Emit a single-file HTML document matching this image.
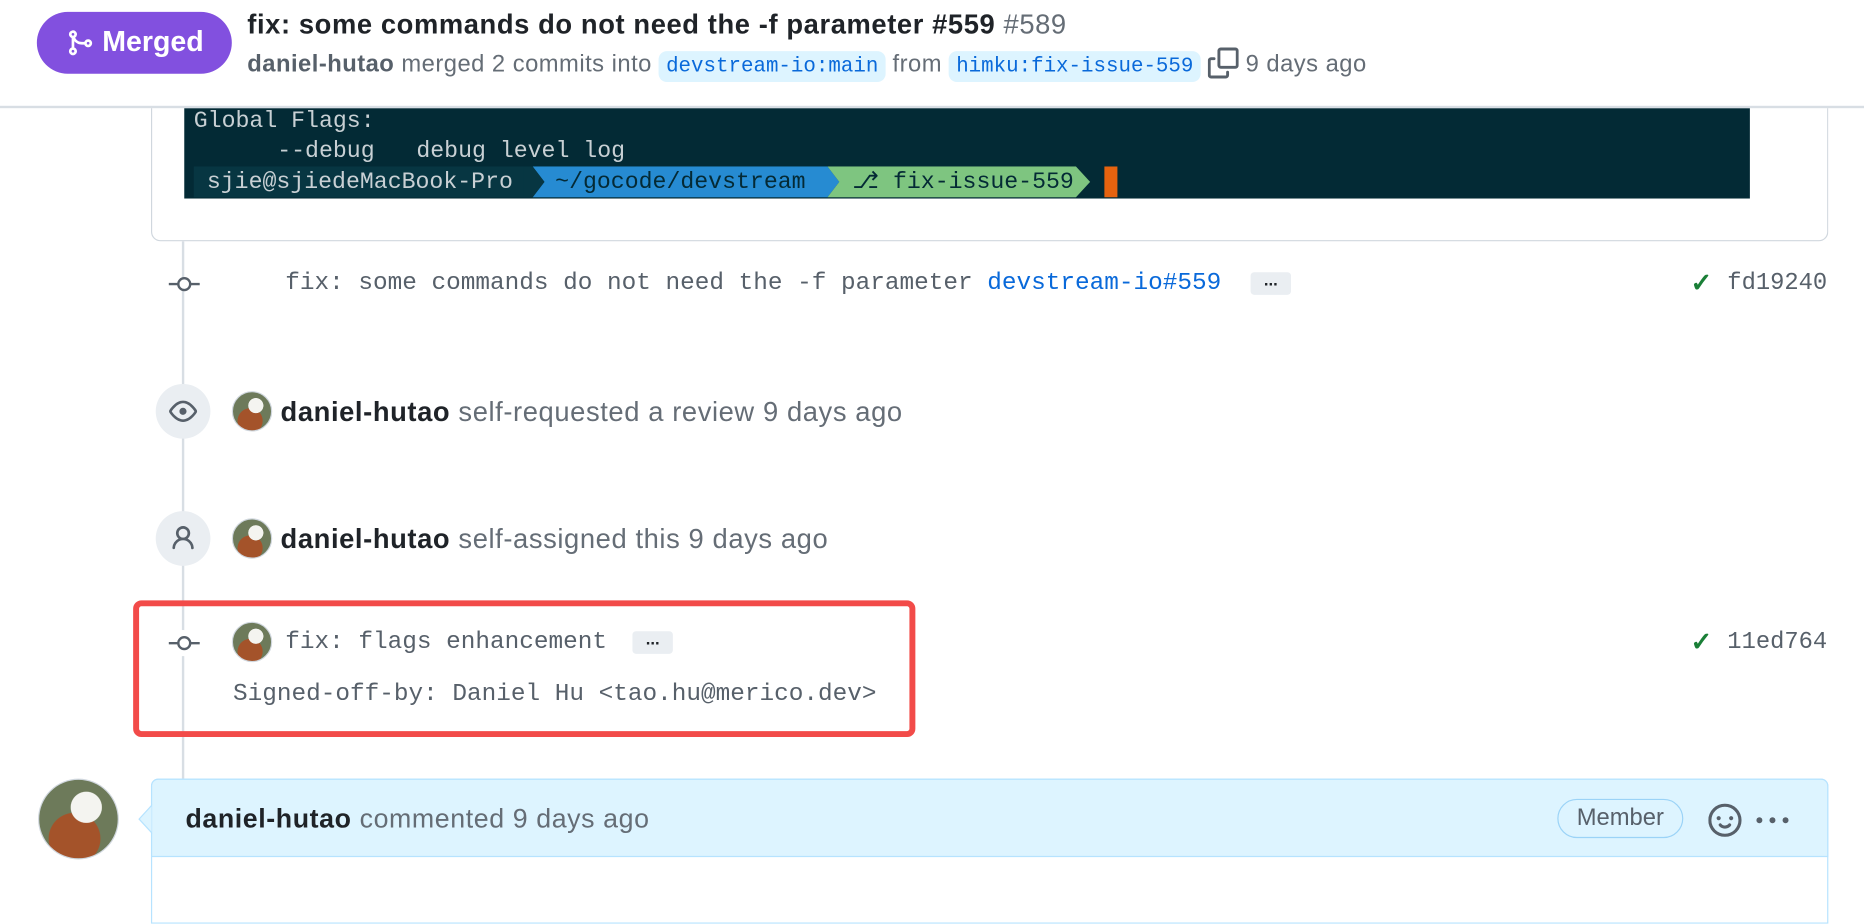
<!DOCTYPE html>
<html><head><meta charset="utf-8"><style>
html,body{margin:0;padding:0;background:#fff;overflow:hidden;width:1864px;height:894px}
#s{position:absolute;left:0;top:0;width:1568px;height:752px;transform:scale(1.18878);transform-origin:0 0;font-family:"Liberation Sans",sans-serif;color:#1f2328}
.a{position:absolute;white-space:nowrap}
.mono{font-family:"Liberation Mono",monospace}
.chip{background:#ddf4ff;color:#0969da;border-radius:7px;padding:0 6px;font-family:"Liberation Mono",monospace;font-size:17.5px;letter-spacing:0;line-height:26px;display:inline-block}
.av{position:absolute;border-radius:50%;background:radial-gradient(circle at 60% 35%,#f4f4f0 0 22%,transparent 23%),radial-gradient(circle at 45% 75%,#a4532a 0 35%,transparent 36%),#6d7a5a;border:1px solid #d0d7de;box-sizing:border-box}
.circ{position:absolute;width:46px;height:46px;border-radius:50%;background:#eaeef2}
.dots{position:absolute;background:#eaeef2;border-radius:3px;width:34px;height:19px;font-size:14px;line-height:12px;text-align:center;color:#1f2328;font-weight:bold}
.tl{font-size:23px;letter-spacing:0.5px;color:#656d76;line-height:26px}
</style></head><body><div id="s">
<div class="a" style="left:127px;top:60px;width:1409px;height:142px;border:1px solid #d0d7de;border-top:none;border-radius:0 0 8px 8px"></div>
<div class="a" style="left:155px;top:90px;width:1317px;height:77px;background:#032a35"></div>
<div class="a mono" style="left:163px;top:90px;font-size:19.5px;color:#c8d0d4;line-height:25px">Global Flags:<br>&nbsp;&nbsp;&nbsp;&nbsp;&nbsp;&nbsp;--debug&nbsp;&nbsp;&nbsp;debug level log</div>
<div class="a" style="left:163px;top:140px;width:285px;height:26px;background:#073642"></div>
<div class="a mono" style="left:174px;top:141px;font-size:19.5px;color:#c8d0d4;line-height:25px">sjie@sjiedeMacBook-Pro</div>
<svg class="a" style="left:440px;top:140px" width="500" height="26"><polygon points="8,0 256,0 266,13 256,26 8,26 18,13" fill="#268bd2"/><polygon points="256,0 465,0 477,13 465,26 256,26 266,13" fill="#7ec580"/><polygon points="0,0 8,0 18,13 8,26 0,26" fill="#073642"/><rect x="489" y="0" width="11" height="26" fill="#e6630f"/></svg>
<div class="a mono" style="left:467px;top:141px;font-size:19.5px;color:#042a35;line-height:25px">~/gocode/devstream</div>
<div class="a mono" style="left:717px;top:141px;font-size:19.5px;color:#042a35;line-height:25px">⎇ fix-issue-559</div>
<div class="a" style="left:0;top:0;width:1568px;height:89px;background:#fff;border-bottom:2px solid #d8dee4"></div>
<div class="a" style="left:31px;top:10px;width:164px;height:52px;border-radius:26px;background:#8250df;color:#fff;font-size:24px;line-height:52px">
<svg style="position:absolute;left:24px;top:14px" width="24" height="24" viewBox="0 0 16 16" fill="#fff"><path d="M5.45 5.154A4.25 4.25 0 0 0 9.25 7.5h1.378a2.251 2.251 0 1 1 0 1.5H9.25A5.734 5.734 0 0 1 5 7.123v3.505a2.25 2.25 0 1 1-1.5 0V5.372a2.25 2.25 0 1 1 1.95-.218ZM4.25 13.5a.75.75 0 1 0 0-1.5.75.75 0 0 0 0 1.5Zm8.5-4.5a.75.75 0 1 0 0-1.5.75.75 0 0 0 0 1.5ZM5 3.25a.75.75 0 1 0 0 .005V3.25Z"/></svg>
<span style="position:absolute;left:55px;font-weight:bold">Merged</span></div>
<div class="a" style="left:208px;top:7px;font-size:23px;letter-spacing:0.5px;font-weight:bold">fix: some commands do not need the -f parameter #559 <span style="font-weight:normal;color:#656d76">#589</span></div>
<div class="a" style="left:208px;top:40px;font-size:20px;letter-spacing:0.4px;color:#656d76;line-height:28px"><b style="color:#57606a">daniel-hutao</b> merged 2 commits into <span class="chip">devstream-io:main</span> from <span class="chip">himku:fix-issue-559</span> <svg style="vertical-align:-6px" width="26" height="26" viewBox="0 0 16 16" fill="#57606a"><path d="M0 6.75C0 5.784.784 5 1.750 5h1.5a.75.75 0 0 1 0 1.5h-1.5a.25.25 0 0 0-.25.25v7.5c0 .138.112.25.25.25h7.5a.25.25 0 0 0 .25-.25v-1.5a.75.75 0 0 1 1.5 0v1.5A1.75 1.75 0 0 1 9.25 16h-7.5A1.75 1.75 0 0 1 0 14.25Z"/><path d="M5 1.75C5 .784 5.784 0 6.75 0h7.5C15.216 0 16 .784 16 1.75v7.5A1.75 1.75 0 0 1 14.25 11h-7.5A1.75 1.75 0 0 1 5 9.25Zm1.75-.25a.25.25 0 0 0-.25.25v7.5c0 .138.112.25.25.25h7.5a.25.25 0 0 0 .25-.25v-7.5a.25.25 0 0 0-.25-.25Z"/></svg> 9 days ago</div>
<div class="a" style="left:153px;top:203px;width:2px;height:452px;background:#d8dee4"></div>
<svg class="a" style="left:140px;top:228px" width="30" height="22"><line x1="2" y1="11" x2="28" y2="11" stroke="#57606a" stroke-width="2"/><circle cx="15" cy="11" r="5" fill="#fff" stroke="#57606a" stroke-width="2"/></svg>
<div class="a mono" style="left:240px;top:226px;font-size:20.5px;color:#57606a;line-height:26px">fix: some commands do not need the -f parameter <span style="color:#0969da">devstream-io#559</span></div>
<div class="dots" style="left:1052px;top:229px">...</div>
<div class="a" style="left:1422px;top:225px;font-size:22px;font-weight:bold;color:#1a7f37;line-height:26px">✓</div>
<div class="a mono" style="left:1453px;top:226px;font-size:20px;color:#57606a;line-height:26px">fd19240</div>
<div class="circ" style="left:131px;top:323px"></div>
<svg class="a" style="left:142px;top:334px" width="24" height="24" viewBox="0 0 16 16" fill="#57606a"><path d="M8 2c1.981 0 3.671.992 4.933 2.078 1.27 1.091 2.187 2.345 2.637 3.023a1.62 1.62 0 0 1 0 1.798c-.45.678-1.367 1.932-2.637 3.023C11.67 13.008 9.981 14 8 14c-1.981 0-3.671-.992-4.933-2.078C1.797 10.830.88 9.576.43 8.898a1.62 1.62 0 0 1 0-1.798c.45-.677 1.367-1.931 2.637-3.022C4.330 2.992 6.019 2 8 2ZM1.679 7.932a.12.12 0 0 0 0 .136c.411.622 1.241 1.75 2.366 2.717C5.176 11.758 6.527 12.5 8 12.5c1.473 0 2.825-.742 3.955-1.715 1.124-.967 1.954-2.096 2.366-2.717a.12.12 0 0 0 0-.136c-.412-.621-1.242-1.75-2.366-2.717C10.824 4.242 9.473 3.5 8 3.5c-1.473 0-2.825.742-3.955 1.715-1.124.967-1.954 2.096-2.366 2.717ZM8 10a2 2 0 1 1-.001-3.999A2 2 0 0 1 8 10Z"/></svg>
<div class="av" style="left:195px;top:329px;width:34px;height:34px"></div>
<div class="a tl" style="left:236px;top:333px"><b style="color:#1f2328">daniel-hutao</b> self-requested a review 9 days ago</div>
<div class="circ" style="left:131px;top:430px"></div>
<svg class="a" style="left:142px;top:441px" width="24" height="24" viewBox="0 0 16 16" fill="#57606a"><path d="M10.561 8.073a6.005 6.005 0 0 1 3.432 5.142.75.75 0 1 1-1.498.07 4.5 4.5 0 0 0-8.990 0 .75.75 0 0 1-1.498-.07 6.004 6.004 0 0 1 3.431-5.142 3.999 3.999 0 1 1 5.123 0ZM10.5 5a2.5 2.5 0 1 0-5 0 2.5 2.5 0 0 0 5 0Z"/></svg>
<div class="av" style="left:195px;top:436px;width:34px;height:34px"></div>
<div class="a tl" style="left:236px;top:440px"><b style="color:#1f2328">daniel-hutao</b> self-assigned this 9 days ago</div>
<svg class="a" style="left:140px;top:530px" width="30" height="22"><rect x="0" y="0" width="30" height="22" fill="#fff"/><line x1="2" y1="11" x2="28" y2="11" stroke="#57606a" stroke-width="2"/><circle cx="15" cy="11" r="5" fill="#fff" stroke="#57606a" stroke-width="2"/></svg>
<div class="av" style="left:195px;top:523px;width:34px;height:34px"></div>
<div class="a mono" style="left:240px;top:528px;font-size:20.5px;color:#57606a;line-height:26px">fix: flags enhancement</div>
<div class="dots" style="left:532px;top:531px">...</div>
<div class="a mono" style="left:196px;top:572px;font-size:20.5px;color:#57606a;line-height:26px">Signed-off-by: Daniel Hu &lt;tao.hu@merico.dev&gt;</div>
<div class="a" style="left:1422px;top:527px;font-size:22px;font-weight:bold;color:#1a7f37;line-height:26px">✓</div>
<div class="a mono" style="left:1453px;top:528px;font-size:20px;color:#57606a;line-height:26px">11ed764</div>
<div class="a" style="left:112px;top:505px;width:648px;height:105px;border:5px solid #f24b49;border-radius:7px"></div>
<div class="av" style="left:32px;top:655px;width:68px;height:68px"></div>
<div class="a" style="left:127px;top:655px;width:1409px;height:120px;border:1px solid #b6e3ff;border-radius:6px 6px 0 0;background:#fff"></div>
<div class="a" style="left:127px;top:655px;width:1409px;height:64px;border:1px solid #b6e3ff;border-radius:6px 6px 0 0;background:#ddf4ff"></div>
<svg class="a" style="left:116px;top:677px" width="13" height="24"><polygon points="12,0 1,12 12,24" fill="#ddf4ff" stroke="#b6e3ff"/><rect x="12" y="0" width="2" height="24" fill="#ddf4ff"/></svg>
<div class="a" style="left:156px;top:676px;font-size:22.5px;letter-spacing:0.5px;color:#656d76;line-height:26px"><b style="color:#1f2328">daniel-hutao</b> commented 9 days ago</div>
<div class="a" style="left:1310px;top:672px;width:106px;height:33px;border:1px solid #9bd3f7;border-radius:17px;box-sizing:border-box;font-size:20px;line-height:31px;text-align:center;color:#57606a">Member</div>
<svg class="a" style="left:1437px;top:676px" width="28" height="28" viewBox="0 0 16 16" fill="#57606a"><path d="M8 0a8 8 0 1 1 0 16A8 8 0 0 1 8 0ZM1.5 8a6.5 6.5 0 1 0 13 0 6.5 6.5 0 0 0-13 0Zm3.82 1.636a.75.75 0 0 1 1.038.175l.007.009c.103.118.22.222.35.31.264.178.683.37 1.285.37.602 0 1.02-.192 1.285-.371.13-.088.247-.192.35-.31l.007-.008a.75.75 0 0 1 1.222.87l-.022-.015c.02.013.021.015.021.015v.001l-.001.002-.002.003-.005.007-.014.019a2.066 2.066 0 0 1-.184.213c-.16.166-.338.316-.53.445-.63.418-1.37.638-2.127.629-.946 0-1.652-.308-2.126-.63a3.331 3.331 0 0 1-.715-.657l-.014-.02-.005-.006-.002-.003v-.002h-.001l.613-.432-.614.43a.75.75 0 0 1 .183-1.044ZM12 7a1 1 0 1 1-2 0 1 1 0 0 1 2 0ZM5 8a1 1 0 1 1 0-2 1 1 0 0 1 0 2Z"/></svg>
<svg class="a" style="left:1476px;top:682px" width="30" height="16"><circle cx="4" cy="8" r="2.5" fill="#57606a"/><circle cx="15" cy="8" r="2.5" fill="#57606a"/><circle cx="26" cy="8" r="2.5" fill="#57606a"/></svg>
</div></body></html>
